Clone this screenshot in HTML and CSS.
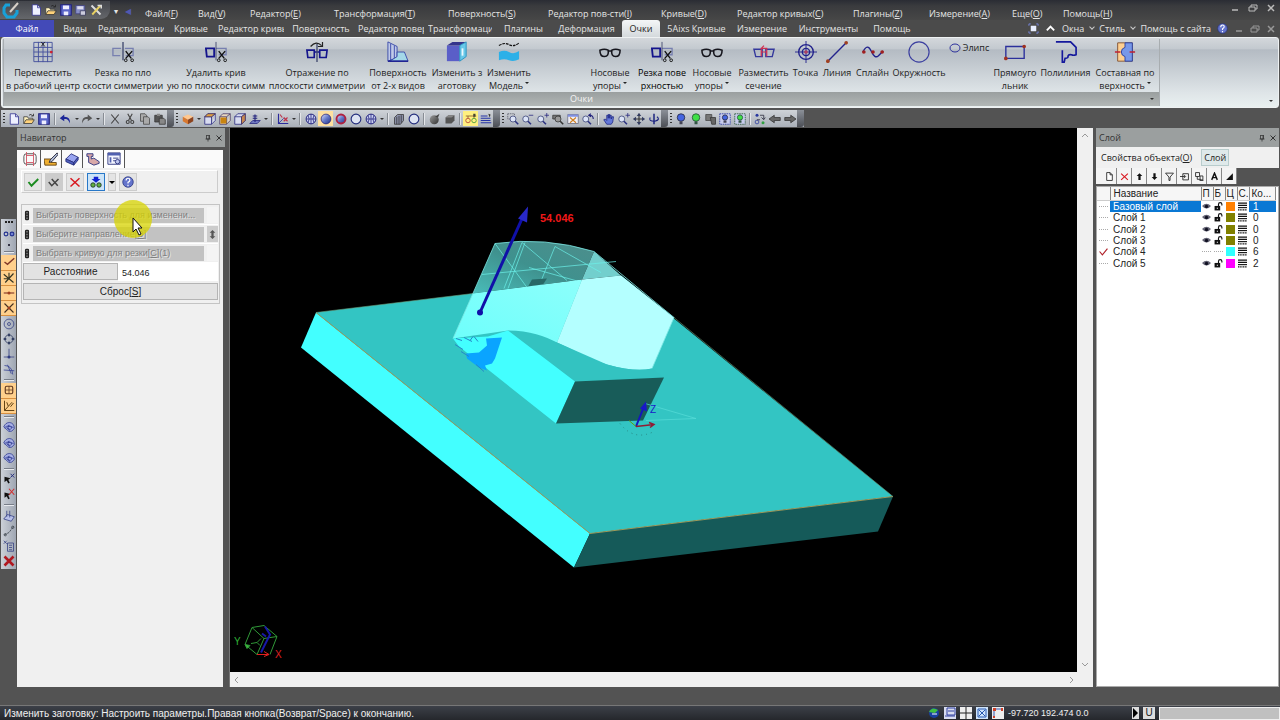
FILE: index.html
```html
<!DOCTYPE html>
<html lang="ru">
<head>
    <meta charset="UTF-8">
    <meta name="viewport" content="width=device-width, initial-scale=1.0">
    <title>Очки</title>
    <link rel="stylesheet" href="styles.css">
</head>
<body>
    <!-- icon sprite -->
    <svg class="sprite" aria-hidden="true">
        <linearGradient id="ball" x1="0" y1="0" x2="1" y2="1"><stop offset="0" stop-color="#dfe6ff"/><stop offset=".5" stop-color="#6478c8"/><stop offset="1" stop-color="#222f80"/></linearGradient>
        <linearGradient id="grayball" x1="0" y1="0" x2="1" y2="1"><stop offset="0" stop-color="#999"/><stop offset="1" stop-color="#333"/></linearGradient>
        <symbol id="i-new" viewBox="0 0 16 16"><path d="M3 1h7l4 4v10H3z" fill="#eef0ff" stroke="#2a2a8c"/><path d="M10 1v4h4" fill="none" stroke="#2a2a8c"/></symbol>
        <symbol id="i-open" viewBox="0 0 16 16"><path d="M1 14V5h5l1 2h6v2" fill="#fff3c0" stroke="#333"/><path d="M1 14l3-5h11l-3 5z" fill="#ffd27a" stroke="#333"/><path d="M8 3q3-3 5 1m-2 0h3V1" fill="none" stroke="#222"/></symbol>
        <symbol id="i-save" viewBox="0 0 16 16"><path d="M1 1h14v14H1z" fill="#5a64c8" stroke="#20207c" stroke-width="1.5"/><path d="M4 2h8v5H4zM5 10h6v5H5z" fill="#eef"/></symbol>
        <symbol id="i-saveas" viewBox="0 0 16 16"><path d="M1 2h12v11H1z" fill="#8890c8" stroke="#404080"/><path d="M3 3h8v4H3z" fill="#dde"/><path d="M7 9h7v6H7z" fill="#ccd" stroke="#335"/></symbol>
        <symbol id="i-tools" viewBox="0 0 16 16"><path d="M2 2l12 12" stroke="#ddd" stroke-width="2.5"/><path d="M14 2L3 14" stroke="#e8d060" stroke-width="2.5"/><path d="M10 2h5v4" fill="none" stroke="#ddd" stroke-width="2"/></symbol>
        <symbol id="i-undo" viewBox="0 0 16 16"><path d="M7 2L1 7l6 4V8q6-1 7 6 2-9-7-9z" fill="#1c2698"/></symbol>
        <symbol id="i-redo" viewBox="0 0 16 16"><path d="M9 2l6 5-6 4V8q-6-1-7 6-2-9 7-9z" fill="#555"/></symbol>
        <symbol id="i-x" viewBox="0 0 16 16"><path d="M3 2l10 12M13 2L3 14" stroke="#444" stroke-width="1.5"/></symbol>
        <symbol id="i-cut" viewBox="0 0 16 16"><path d="M5 1l5 9M11 1l-5 9" stroke="#444" stroke-width="1.5"/><circle cx="5" cy="12" r="2" fill="none" stroke="#444" stroke-width="1.5"/><circle cx="11" cy="12" r="2" fill="none" stroke="#444" stroke-width="1.5"/></symbol>
        <symbol id="i-copy" viewBox="0 0 16 16"><path d="M2 1h6l2 2v8H2z" fill="#aaa" stroke="#444"/><path d="M6 5h6l2 2v8H6z" fill="#aaa" stroke="#444"/></symbol>
        <symbol id="i-paste" viewBox="0 0 16 16"><path d="M1 3h10v9H1z" fill="#555" stroke="#333"/><path d="M4 1h4v3H4z" fill="#888"/><path d="M7 7h6l2 2v6H7z" fill="#888" stroke="#333"/></symbol>
        <symbol id="i-box" viewBox="0 0 16 16"><path d="M1 5l7-3 7 3-7 4z" fill="#ffc890"/><path d="M1 5l7 4v6l-7-4z" fill="#d87830"/><path d="M15 5L8 9v6l7-4z" fill="#8c4420"/></symbol>
        <symbol id="i-cube" viewBox="0 0 16 16"><path d="M1 5h9v10H1zM1 5l4-4h10l-5 4M15 1v9l-5 5" fill="#d8dcf0" stroke="#22227c"/><path d="M1 5l4-4h10l-5 4z" fill="#e0a040" stroke="#403060"/></symbol>
        <symbol id="i-cubef" viewBox="0 0 16 16"><path d="M1 5h9v10H1zM1 5l4-4h10l-5 4M15 1v9l-5 5" fill="#e8d8c0" stroke="#403060"/><path d="M2 6h8v8H2z" fill="#c88410"/></symbol>
        <symbol id="i-cuber" viewBox="0 0 16 16"><path d="M1 5h9v10H1zM1 5l4-4h10l-5 4M15 1v9l-5 5" fill="#d8dcf0" stroke="#22227c"/><path d="M10 5l5-4v9l-5 5z" fill="#c88850" stroke="#403060"/></symbol>
        <symbol id="i-plane" viewBox="0 0 16 16"><path d="M1 14l4-4h10l-4 4z" fill="#7078c0" stroke="#22227c"/><path d="M8 12V2M5 4h6M5 7h6" stroke="#22227c" stroke-width="1.5"/></symbol>
        <symbol id="i-axes" viewBox="0 0 16 16"><path d="M2 1v13h13" fill="none" stroke="#2a2a9c" stroke-width="1.5"/><path d="M2 14l7-7" stroke="#2a2a9c"/><path d="M9 6l5 5m0-5l-5 5" stroke="#c03048" stroke-width="1.5"/><path d="M4 2l3 4" stroke="#c03048" stroke-width="1.5"/></symbol>
        <symbol id="i-globe" viewBox="0 0 16 16"><circle cx="8" cy="8" r="6.5" fill="#c8cef0" stroke="#20207c" stroke-width="1.3"/><path d="M2 8h12M8 1.5v13M4 3q3 5 0 10M12 3q-3 5 0 10" fill="none" stroke="#20207c"/></symbol>
        <symbol id="i-ball" viewBox="0 0 16 16"><circle cx="8" cy="8" r="6.5" fill="url(#ball)" stroke="#20207c"/></symbol>
        <symbol id="i-redball" viewBox="0 0 16 16"><circle cx="8" cy="8" r="6" fill="url(#ball)" stroke="#b02040" stroke-width="2.5"/></symbol>
        <symbol id="i-ring" viewBox="0 0 16 16"><circle cx="8" cy="8" r="6.5" fill="#dde3f2" stroke="#222c7c" stroke-width="1.5"/></symbol>
        <symbol id="i-hatch" viewBox="0 0 16 16"><path d="M2 6l4-4h8v8l-4 5H2z" fill="#8a8fa8" stroke="#333"/><path d="M5 5v10M8 4v11M11 3v10" stroke="#333"/></symbol>
        <symbol id="i-grayball" viewBox="0 0 16 16"><circle cx="7" cy="9" r="6" fill="url(#grayball)"/><path d="M8 5l6-4-2 5z" fill="#444"/></symbol>
        <symbol id="i-graybox" viewBox="0 0 16 16"><path d="M2 6l4-3h8v7l-4 4H2z" fill="#555"/><path d="M2 6l4-3h8l-4 3z" fill="#888"/></symbol>
        <symbol id="i-glasses-y" viewBox="0 0 16 16"><path d="M1 4h14M4 4v3m8-3v3" stroke="#805020"/><circle cx="4" cy="10" r="3" fill="none" stroke="#b03030"/><circle cx="12" cy="10" r="3" fill="none" stroke="#309030"/><path d="M11 1h3v4h-3z" fill="#443"/></symbol>
        <symbol id="i-lines" viewBox="0 0 16 16"><path d="M1 4h9M1 7h13M1 10h13M1 13h14" stroke="#2634a8" stroke-width="1.5"/><path d="M11 1l3 1-1 4z" fill="#333"/></symbol>
        <symbol id="i-zoomwin" viewBox="0 0 16 16"><path d="M1 1h9v7H1z" fill="none" stroke="#556" stroke-dasharray="2 1"/><circle cx="8" cy="8" r="4" fill="#dce4f8" stroke="#333c70"/><path d="M11 11l4 4" stroke="#2a3080" stroke-width="2"/></symbol>
        <symbol id="i-zoomminus" viewBox="0 0 16 16"><circle cx="5" cy="8" r="4" fill="#dce4f8" stroke="#333c70"/><path d="M8 11l4 4" stroke="#2a3080" stroke-width="2"/><path d="M9 3h6" stroke="#22227c"/></symbol>
        <symbol id="i-zoomplus" viewBox="0 0 16 16"><circle cx="5" cy="8" r="4" fill="#dce4f8" stroke="#333c70"/><path d="M8 11l4 4" stroke="#2a3080" stroke-width="2"/><path d="M10 3h6M13 0v6" stroke="#22227c"/></symbol>
        <symbol id="i-zoomprev" viewBox="0 0 16 16"><circle cx="5" cy="8" r="4" fill="#dce4f8" stroke="#333c70"/><path d="M8 11l4 4" stroke="#2a3080" stroke-width="2"/><path d="M15 8q0-5-5-5m2-2l-3 2 3 2" fill="none" stroke="#22227c" stroke-width="1.5"/></symbol>
        <symbol id="i-zoomgray" viewBox="0 0 16 16"><path d="M1 3h10v5H1z" fill="#777" stroke="#333"/><circle cx="8" cy="8" r="4" fill="#999" stroke="#333"/><path d="M11 11l4 4" stroke="#333" stroke-width="2"/></symbol>
        <symbol id="i-fit" viewBox="0 0 16 16"><path d="M1 2h14v12H1z" fill="#f0f0f8" stroke="#667"/><path d="M1 2h14v3H1z" fill="#8090e0"/><path d="M4 6l8 7m0-7l-8 7" stroke="#d08020" stroke-width="1.5"/></symbol>
        <symbol id="i-hand" viewBox="0 0 16 16"><path d="M5 15L1 9l2-1 2 2V3h2v4-5h2v5-4h2v5l1-3h2l-1 7-2 3z" fill="#6478d8" stroke="#1c2480"/></symbol>
        <symbol id="i-move" viewBox="0 0 16 16"><path d="M8 1v14M1 8h14" stroke="#333" stroke-width="1.5"/><path d="M8 0l3 4H5zM8 16l3-4H5zM0 8l4-3v6zM16 8l-4-3v6z" fill="#333c60"/></symbol>
        <symbol id="i-rot" viewBox="0 0 16 16"><path d="M8 1v14" stroke="#1c2480" stroke-width="2"/><path d="M12 5q5 4-3 6-9 0-6-5" fill="none" stroke="#1c2480" stroke-width="1.5"/></symbol>
        <symbol id="i-bulb" viewBox="0 0 16 16"><circle cx="8" cy="6" r="5" fill="#4464e0" stroke="#223"/><path d="M6 11h4v4H6z" fill="#445"/></symbol>
        <symbol id="i-bulbg" viewBox="0 0 16 16"><circle cx="8" cy="6" r="5" fill="#40e048" stroke="#243"/><path d="M6 11h4v4H6z" fill="#354"/></symbol>
        <symbol id="i-graycopy" viewBox="0 0 16 16"><path d="M1 2h8v8H1z" fill="#777" stroke="#444"/><path d="M7 6h7v9H9z" fill="#666" stroke="#333"/></symbol>
        <symbol id="i-bulbsel" viewBox="0 0 16 16"><path d="M1 1h14v14H1z" fill="#c8ccec" stroke="#2030a0" stroke-dasharray="2 1"/><circle cx="8" cy="6" r="3.5" fill="#4464e0" stroke="#223"/><path d="M6 10h4v3H6z" fill="#445"/></symbol>
        <symbol id="i-bulbselg" viewBox="0 0 16 16"><path d="M1 1h14v14H1z" fill="#c8ccec" stroke="#205030" stroke-dasharray="2 1"/><circle cx="8" cy="6" r="3.5" fill="#40e048" stroke="#243"/><path d="M6 10h4v3H6z" fill="#354"/></symbol>
        <symbol id="i-swap" viewBox="0 0 16 16"><circle cx="4" cy="3" r="2" fill="#2838a0"/><circle cx="12" cy="13" r="2" fill="#30a040"/><circle cx="4" cy="12" r="2.5" fill="none" stroke="#2838a0"/><path d="M8 3h5v5M10 6l3 3 2-3M8 9H4" fill="none" stroke="#223"/></symbol>
        <symbol id="i-left" viewBox="0 0 16 16"><path d="M0 8l7-5v3h8v4H7v3z" fill="#666" stroke="#333"/></symbol>
        <symbol id="i-right" viewBox="0 0 16 16"><path d="M16 8L9 3v3H1v4h8v3z" fill="#666" stroke="#333"/></symbol>

        <!-- ribbon icons -->
        <symbol id="r-grid" viewBox="0 0 24 24"><path d="M2 1.5h20v21H2zM7 1v22M12 1v22M17 1v22M2 7h20M2 12h20M2 17h20" fill="none" stroke="#44509c"/><path d="M10 1l4 5m0-5l-4 5" stroke="#222"/><circle cx="21" cy="12" r="1.5" fill="#d02030"/></symbol>
        <symbol id="r-cutsym" viewBox="0 0 24 24"><path d="M10 8H1v8h8M14 8h9v8h-8" fill="none" stroke="#7880b0" stroke-width="1.5"/><path d="M12 1v20" stroke="#444c70" stroke-width="1.5"/><path d="M15 11l6 8m1-8l-7 8" stroke="#111" stroke-width="1.5"/><circle cx="15" cy="21" r="1.5" fill="none" stroke="#111"/><circle cx="22" cy="21" r="1.5" fill="none" stroke="#111"/></symbol>
        <symbol id="r-cutdel" viewBox="0 0 24 24"><path d="M1 8h9v9H2z" fill="none" stroke="#14148c" stroke-width="2"/><path d="M12 8h11v7h-8" fill="none" stroke="#7880b0" stroke-width="1.5"/><path d="M12 1v20" stroke="#444c70"/><path d="M15 11l6 8m1-8l-7 8" stroke="#111" stroke-width="1.5"/><circle cx="15" cy="21" r="1.5" fill="none" stroke="#111"/><circle cx="22" cy="21" r="1.5" fill="none" stroke="#111"/></symbol>
        <symbol id="r-mirror" viewBox="0 0 24 24"><path d="M1 10h8v8H2zM15 10h8l-1 8h-7zM9 12h6" fill="none" stroke="#14148c" stroke-width="1.8"/><path d="M12 3v20" stroke="#444c70" stroke-width="1.5"/><path d="M5 6q6-7 12-1M13 6h5V1" fill="none" stroke="#222" stroke-width="1.3"/></symbol>
        <symbol id="r-views" viewBox="0 0 24 24"><path d="M1 1l10 5v12L1 22zM4 3v18M8 5v14" fill="#c0cae8" stroke="#3848a8"/><path d="M11 12h8l4 10H3l8-5z" fill="#a4d8e8" stroke="#3848a8"/><path d="M1 22h22" stroke="#14148c" stroke-width="1.5"/></symbol>
        <symbol id="r-block" viewBox="0 0 24 24"><path d="M1 5h14v17H1z" fill="#5a5ec8"/><path d="M1 5l6-4h15l-7 4z" fill="#34348c"/><path d="M15 5l7-4v16l-7 5z" fill="#68c8e8" stroke="#2890c0"/><path d="M18 8v8" stroke="#eaf8ff" stroke-width="2"/></symbol>
        <symbol id="r-model" viewBox="0 0 24 24"><path d="M1 5q6-4 11-1t11-2" fill="none" stroke="#111" stroke-dasharray="3 1" stroke-width="1.3"/><path d="M1 12q6-3 11 0t11-1v9q-6 3-11 1T1 21z" fill="#2cb0e8"/></symbol>
        <symbol id="r-glasses" viewBox="0 0 24 24"><path d="M1 10q5-2 9 0 1 7-4 7t-5-7zM14 10q4-2 9 0 0 7-5 7t-4-7zM10 11h4" fill="none" stroke="#15151c" stroke-width="1.7"/></symbol>
        <symbol id="r-section" viewBox="0 0 24 24"><path d="M1 9h9v8H3zM14 9h9l-2 8h-7z" fill="none" stroke="#34389c" stroke-width="1.5"/><path d="M9 17V8h6v9M9 12h6M9 8l3-3" fill="none" stroke="#d03050" stroke-width="1.3"/></symbol>
        <symbol id="r-point" viewBox="0 0 24 24"><circle cx="12" cy="12" r="8" fill="none" stroke="#22228c" stroke-width="1.5"/><circle cx="12" cy="12" r="4" fill="none" stroke="#22228c" stroke-width="1.5"/><path d="M12 0v24M0 12h24" stroke="#22228c"/><circle cx="12" cy="12" r="2" fill="#b04060"/></symbol>
        <symbol id="r-line" viewBox="0 0 24 24"><path d="M2 22L22 2" stroke="#22228c" stroke-width="1.5"/><circle cx="2" cy="22" r="2" fill="#a04020"/><circle cx="22" cy="2" r="2" fill="#a04020"/></symbol>
        <symbol id="r-spline" viewBox="0 0 24 24"><path d="M1 12q5-10 9-1t8 5 5-5" fill="none" stroke="#22228c" stroke-width="1.5"/><circle cx="2" cy="12" r="2" fill="#a02020"/><circle cx="12" cy="12" r="2" fill="#a02020"/><circle cx="22" cy="12" r="2" fill="#a02020"/></symbol>
        <symbol id="r-circle" viewBox="0 0 24 24"><circle cx="12" cy="12" r="11" fill="none" stroke="#3c40a0" stroke-width="1.3"/></symbol>
        <symbol id="r-ellipse" viewBox="0 0 24 24"><ellipse cx="12" cy="12" rx="10" ry="8" fill="none" stroke="#2c309c" stroke-width="2"/></symbol>
        <symbol id="r-rect" viewBox="0 0 24 24"><path d="M2 6h20v13H2z" fill="none" stroke="#2c309c" stroke-width="1.5"/><circle cx="2" cy="19" r="2" fill="#a03020"/><circle cx="22" cy="6" r="2" fill="#a03020"/></symbol>
        <symbol id="r-poly" viewBox="0 0 24 24"><path d="M1 1h16l6 6v8q-3 1-5 0-4-1-4 3-1 1-3 1l-1 4H8V10" fill="none" stroke="#14189c" stroke-width="1.8"/></symbol>
        <symbol id="r-compound" viewBox="0 0 24 24"><path d="M4 2h16v20H4z" fill="#ffd090" stroke="#805030"/><path d="M12 2h8v20h-8v-5q-4-1-4-5t4-5z" fill="#7898e8" stroke="#2840a0"/><path d="M1 12h6M23 12h-6" stroke="#c02030" stroke-width="1.5"/></symbol>

        <!-- snap bar -->
        <symbol id="s-link" viewBox="0 0 16 16"><circle cx="4" cy="8" r="2.5" fill="none" stroke="#223090" stroke-width="1.5"/><circle cx="12" cy="8" r="2.5" fill="#7080d0" stroke="#223090" stroke-width="1.5"/></symbol>
        <symbol id="s-end" viewBox="0 0 16 16"><path d="M2 8l4 3 9-8" fill="none" stroke="#803828" stroke-width="2"/></symbol>
        <symbol id="s-near" viewBox="0 0 16 16"><path d="M1 3l13 11M14 2L3 14M8 1v8H1" fill="none" stroke="#332" stroke-width="1.5"/></symbol>
        <symbol id="s-mid" viewBox="0 0 16 16"><path d="M1 8h14" stroke="#803828" stroke-width="1.5"/><circle cx="8" cy="8" r="2" fill="#a04020"/></symbol>
        <symbol id="s-cross" viewBox="0 0 16 16"><path d="M2 2l12 12M14 2L2 14" stroke="#443020" stroke-width="1.5"/><circle cx="8" cy="8" r="2" fill="#a04020"/></symbol>
        <symbol id="s-center" viewBox="0 0 16 16"><circle cx="8" cy="8" r="6.5" fill="none" stroke="#303c80"/><circle cx="8" cy="8" r="2" fill="none" stroke="#303c80"/></symbol>
        <symbol id="s-quad" viewBox="0 0 16 16"><circle cx="8" cy="8" r="5.5" fill="none" stroke="#303c60"/><path d="M8 0l2 3-2 2-2-2zM8 11l2 2-2 3-2-3zM0 8l3-2 2 2-2 2zM11 8l2-2 3 2-3 2z" fill="#303c60"/></symbol>
        <symbol id="s-perp" viewBox="0 0 16 16"><path d="M8 1v11M1 12h14" stroke="#303c80"/><circle cx="8" cy="12" r="2" fill="#303c80"/></symbol>
        <symbol id="s-tan" viewBox="0 0 16 16"><path d="M2 2q10 0 11 12M1 8l14 1M6 1l5 12" fill="none" stroke="#303c90"/></symbol>
        <symbol id="s-grid" viewBox="0 0 16 16"><rect x="3" y="3" width="10" height="10" rx="2" fill="none" stroke="#603820" stroke-width="1.5"/><path d="M8 3v10M3 8h10" stroke="#603820"/></symbol>
        <symbol id="s-graph" viewBox="0 0 16 16"><path d="M2 1v13h13M2 14L12 3M5 3l2 5M10 9l4-5" fill="none" stroke="#604010" stroke-width="1.3"/></symbol>
        <symbol id="s-surf" viewBox="0 0 16 16"><path d="M1 8q2-6 8-6 6 1 6 8-3 5-7 4z" fill="#a8b0e4" stroke="#2c3890"/><path d="M2 9q5-5 12 0M8 5q-3 4 1 8M5 9q2-4 7 0-2 3-5 2z" fill="none" stroke="#2c3890"/></symbol>
        <symbol id="s-pick" viewBox="0 0 16 16"><path d="M2 5l8 2-3 2 2 4-2 1-2-4-3 2z" fill="#111"/><path d="M10 1l5 5m0-5l-5 5" stroke="#283080" stroke-width="1.3"/></symbol>
        <symbol id="s-unpick" viewBox="0 0 16 16"><path d="M2 6l8 2-3 2 2 4-2 1-2-4-3 2z" fill="#111"/><path d="M8 1l7 8m0-8L8 9" stroke="#d03030" stroke-width="1.5"/></symbol>
        <symbol id="s-proj" viewBox="0 0 16 16"><path d="M1 12l5-6 9 3-4 6z" fill="#b8c0e8" stroke="#303c80"/><path d="M5 1v8M9 1v9" stroke="#303c80"/></symbol>
        <symbol id="s-chain" viewBox="0 0 16 16"><path d="M2 13l6-3 6-8" fill="none" stroke="#303840" stroke-dasharray="3 1"/><circle cx="3" cy="13" r="1.5" fill="none" stroke="#303840"/><circle cx="13" cy="3" r="1.5" fill="none" stroke="#303840"/></symbol>
        <symbol id="s-list" viewBox="0 0 16 16"><path d="M6 4h8v11H6zM8 7h4M8 10h4M8 13h4" fill="none" stroke="#303c80"/><path d="M1 1l4 4m0-4L1 5" stroke="#303c80"/></symbol>
        <symbol id="s-clear" viewBox="0 0 16 16"><path d="M2 2l12 12M14 2L2 14" stroke="#b01820" stroke-width="3.5"/></symbol>

        <!-- navigator -->
        <symbol id="n-frame" viewBox="0 0 16 16"><rect x="1" y="2" width="14" height="12" rx="3" fill="none" stroke="#444"/><rect x="4" y="4" width="8" height="8" fill="none" stroke="#d05060"/><path d="M4 0v4M12 0v4M4 12v4M12 12v4" stroke="#d05060"/></symbol>
        <symbol id="n-pen" viewBox="0 0 16 16"><path d="M0 8h8v4h6v3H1z" fill="#f0b030" stroke="#604010"/><path d="M15 1L7 9l-1 3 3-1 7-8z" fill="#b0bcd8" stroke="#223"/></symbol>
        <symbol id="n-slab" viewBox="0 0 16 16"><path d="M1 8l6-6 8 4-5 6z" fill="#98a4f0" stroke="#28307c"/><path d="M1 8l9 4v3l-9-4zM10 12l5-6v3l-5 6z" fill="#5060c0" stroke="#28307c"/></symbol>
        <symbol id="n-path" viewBox="0 0 16 16"><path d="M1 2h7v3H6v3l3-1 6 4v2l-6 2-6-3V5H1z" fill="#d8a8a8" stroke="#28307c"/></symbol>
        <symbol id="n-win" viewBox="0 0 16 16"><path d="M1 1h14v13H1z" fill="#f4f6ff" stroke="#28307c"/><path d="M1 1h14v3H1zM3 6h2v6H3z" fill="#5060b0"/><path d="M7 7h6M7 10h3" stroke="#28307c"/><circle cx="12" cy="11" r="2.5" fill="#c0c8f0" stroke="#28307c"/></symbol>
        <symbol id="n-ok" viewBox="0 0 16 16"><path d="M2 8l4 5 9-9" fill="none" stroke="#1c8c20" stroke-width="2.5"/></symbol>
        <symbol id="n-apply" viewBox="0 0 16 16"><path d="M1 8l4 5 9-9M5 4l8 9" fill="none" stroke="#444" stroke-width="2"/></symbol>
        <symbol id="n-cancel" viewBox="0 0 16 16"><path d="M2 3l12 11M14 3L2 14" stroke="#d81820" stroke-width="2"/></symbol>
        <symbol id="n-preview" viewBox="0 0 16 16"><path d="M5 1h6v3h3l-6 5-6-5h3z" fill="#1020d0"/><circle cx="4" cy="12" r="3" fill="#60b040" stroke="#122"/><circle cx="12" cy="12" r="3" fill="#60b040" stroke="#122"/></symbol>
        <symbol id="n-help" viewBox="0 0 16 16"><circle cx="8" cy="8" r="7" fill="#6474cc" stroke="#24307c"/><path d="M5.5 6q0-3 2.5-3t2.5 2.5Q10.5 7 8 8.5V10M8 11.5v2" fill="none" stroke="#fff" stroke-width="1.6"/></symbol>
        <symbol id="n-light" viewBox="0 0 8 16"><rect x="1" y="1" width="6" height="14" rx="2" fill="#222"/><path d="M3 4h2M3 8h2M3 12h2" stroke="#888" stroke-width="2"/></symbol>
        <symbol id="n-flip" viewBox="0 0 16 16"><path d="M8 0l5 5h-3v6h3l-5 5-5-5h3V5H3z" fill="#555"/></symbol>
        <symbol id="n-pin" viewBox="0 0 16 16"><path d="M4 3h8M5 3v7h6V3M10 3v7M3 10h10M8 10v5" fill="none" stroke="#333" stroke-width="1.5"/></symbol>
        <symbol id="n-close" viewBox="0 0 16 16"><path d="M3 3l10 10M13 3L3 13" stroke="#333" stroke-width="2"/></symbol>

        <!-- layers -->
        <symbol id="l-up" viewBox="0 0 16 16"><path d="M8 2l5 5h-3v7H6V7H3z" fill="#111"/></symbol>
        <symbol id="l-down" viewBox="0 0 16 16"><path d="M8 14l5-5h-3V2H6v7H3z" fill="#111"/></symbol>
        <symbol id="l-page" viewBox="0 0 16 16"><path d="M3 1h6l4 4v10H3zM9 1v4h4" fill="#fff" stroke="#222" stroke-width="1.5"/></symbol>
        <symbol id="l-filter" viewBox="0 0 16 16"><path d="M1 2h14L9 9v6H7V9z" fill="none" stroke="#222" stroke-width="1.5"/></symbol>
        <symbol id="l-into" viewBox="0 0 16 16"><path d="M5 3h10v11H5zM0 8h9M7 5l3 3-3 3" fill="none" stroke="#222" stroke-width="1.5"/></symbol>
        <symbol id="l-tree" viewBox="0 0 16 16"><path d="M1 1h7v7H1zM4 8v5h6M9 7h5v7H9zM8 15h7" fill="none" stroke="#222" stroke-width="1.5"/></symbol>
        <symbol id="l-font" viewBox="0 0 16 16"><path d="M3 14L8 2l5 12M5 10h6" fill="none" stroke="#111" stroke-width="2.5"/></symbol>
        <symbol id="l-tri" viewBox="0 0 16 16"><path d="M14 2v12H2z" fill="#111"/></symbol>
        <symbol id="l-eye" viewBox="0 0 16 16"><path d="M0 7q8-8 16 0-8 9-16 0" fill="#667"/><circle cx="8" cy="8" r="3" fill="#112"/></symbol>
        <symbol id="l-lock" viewBox="0 0 16 16"><path d="M1 7h10v8H1z" fill="#111"/><path d="M8 8V4q0-3 3-3t3 3v2" fill="none" stroke="#111" stroke-width="2"/><path d="M5 10h2v2H5z" fill="#fff"/></symbol>
        <symbol id="l-style" viewBox="0 0 16 16"><path d="M0 2h16M0 6h16" stroke="#111" stroke-width="2"/><path d="M0 10h16" stroke="#111" stroke-width="2"/><path d="M0 14h16" stroke="#111" stroke-width="2" stroke-dasharray="2 1"/></symbol>
    </svg>

    <header class="titlebar">
        <div class="quick">
            <svg class="logo" viewBox="0 0 20 17" aria-hidden="true"><path d="M9 3H5L3 6v5l3 4h7l3-4V8" fill="none" stroke="#18a0d8" stroke-width="3"/><path d="M17 1l-8 9" stroke="#d8d0c8" stroke-width="2"/></svg>
            <button class="tool" title="Новый"><svg><use href="#i-new"/></svg></button>
            <button class="tool" title="Открыть"><svg><use href="#i-open"/></svg></button>
            <button class="tool" title="Сохранить"><svg><use href="#i-save"/></svg></button>
            <button class="tool" title="Сохранить как"><svg><use href="#i-saveas"/></svg></button>
            <button class="tool" title="Настройки"><svg><use href="#i-tools"/></svg></button>
        </div>
        <button class="quick-more" title="Еще">▾</button>
        <button class="quick-back" title="Назад">◀</button>
        <nav class="menu">
            <button>Файл(<u>F</u>)</button>
            <button>Вид(<u>V</u>)</button>
            <button>Редактор(<u>E</u>)</button>
            <button>Трансформация(<u>T</u>)</button>
            <button>Поверхность(<u>S</u>)</button>
            <button>Редактор пов-сти(<u>I</u>)</button>
            <button>Кривые(<u>D</u>)</button>
            <button>Редактор кривых(<u>C</u>)</button>
            <button>Плагины(<u>Z</u>)</button>
            <button>Измерение(<u>A</u>)</button>
            <button>Еще(<u>O</u>)</button>
            <button>Помощь(<u>H</u>)</button>
        </nav>
        <div class="winctl">
            <button title="Свернуть"><svg viewBox="0 0 10 10"><path d="M2 7h6" stroke="#bbb" stroke-width="1.5"/></svg></button>
            <button title="Развернуть"><svg viewBox="0 0 10 10"><path d="M1 4h6v4H1zM3 4V2h6v4H7" fill="none" stroke="#bbb"/></svg></button>
            <button title="Закрыть"><svg viewBox="0 0 10 10"><path d="M2 2l6 6M8 2L2 8" stroke="#bbb" stroke-width="1.5"/></svg></button>
        </div>
    </header>

    <div class="tabrow">
        <nav class="tabs">
            <button class="tab tab-file">Файл</button>
            <button class="tab">Виды</button>
            <button class="tab">Редактировани</button>
            <button class="tab">Кривые</button>
            <button class="tab">Редактор кривых</button>
            <button class="tab">Поверхность</button>
            <button class="tab">Редактор поверх</button>
            <button class="tab">Трансформаци</button>
            <button class="tab">Плагины</button>
            <button class="tab">Деформация</button>
            <button class="tab tab-active">Очки</button>
            <button class="tab">5Aixs Кривые</button>
            <button class="tab">Измерение</button>
            <button class="tab">Инструменты</button>
            <button class="tab">Помощь</button>
        </nav>
        <div class="tabextra">
            <button title="Во весь экран"><svg viewBox="0 0 12 12"><path d="M3 3h6v6H3z" fill="#e8eeff"/><path d="M1 3V1h2M9 1h2v2M11 9v2H9M3 11H1V9" fill="none" stroke="#7888e0"/></svg></button>
            <button title="Свернуть ленту"><svg viewBox="0 0 12 12"><path d="M2 8l4-4 4 4" fill="none" stroke="#fff" stroke-width="2"/></svg></button>
            <button>Окна</button>
            <button><i class="chev"></i>Стиль</button>
            <button><i class="chev"></i>Помощь с сайта</button>
            <button title="Справка"><svg><use href="#n-help"/></svg></button>
        </div>
        <div class="winctl winctl-dim">
            <button title="Свернуть окно"><svg viewBox="0 0 10 10"><path d="M2 7h6" stroke="#999" stroke-width="1.5"/></svg></button>
            <button title="Развернуть окно"><svg viewBox="0 0 10 10"><path d="M1 4h6v4H1zM3 4V2h6v4H7" fill="none" stroke="#999"/></svg></button>
            <button title="Закрыть окно"><svg viewBox="0 0 10 10"><path d="M2 2l6 6M8 2L2 8" stroke="#999" stroke-width="1.5"/></svg></button>
        </div>
    </div>

    <section class="ribbon">
        <div class="group">
            <div class="group-items">
                <button class="big"><svg><use href="#r-grid"/></svg>Переместить<br>в рабочий центр</button>
                <button class="big"><svg><use href="#r-cutsym"/></svg>Резка по пло<br>скости симметрии</button>
                <button class="big"><svg><use href="#r-cutdel"/></svg>Удалить крив<br>ую по плоскости симм</button>
                <button class="big"><svg><use href="#r-mirror"/></svg>Отражение по<br>плоскости симметрии</button>
                <button class="big"><svg><use href="#r-views"/></svg>Поверхность<br>от 2-х видов</button>
                <button class="big"><svg><use href="#r-block"/></svg>Изменить з<br>аготовку</button>
                <button class="big"><svg><use href="#r-model"/></svg>Изменить<br><span class="drop">Модель</span></button>
                <span></span>
                <button class="big"><svg><use href="#r-glasses"/></svg>Носовые<br><span class="drop">упоры</span></button>
                <button class="big big-on"><svg><use href="#r-cutdel"/></svg>Резка пове<br>рхностью</button>
                <button class="big"><svg><use href="#r-glasses"/></svg>Носовые<br><span class="drop">упоры</span></button>
                <button class="big"><svg><use href="#r-section"/></svg>Разместить<br>сечение</button>
                <button class="big"><svg><use href="#r-point"/></svg>Точка</button>
                <button class="big"><svg><use href="#r-line"/></svg>Линия</button>
                <button class="big"><svg><use href="#r-spline"/></svg>Сплайн</button>
                <button class="big"><svg><use href="#r-circle"/></svg>Окружность</button>
                <button class="small"><svg><use href="#r-ellipse"/></svg>Элипс</button>
                <button class="big"><svg><use href="#r-rect"/></svg>Прямоуго<br>льник</button>
                <button class="big"><svg><use href="#r-poly"/></svg>Полилиния</button>
                <button class="big"><svg><use href="#r-compound"/></svg>Составная по<br><span class="drop">верхность</span></button>
            </div>
            <div class="group-name">Очки<i class="caret"></i></div>
        </div>
        <i class="caret ribbon-caret"></i>
    </section>

    <div class="toolbars">
        <div class="bar bar-edit">
            <i class="grip"></i>
            <button class="tool" title="Новый"><svg><use href="#i-new"/></svg></button>
            <button class="tool" title="Открыть"><svg><use href="#i-open"/></svg></button>
            <button class="tool" title="Сохранить"><svg><use href="#i-save"/></svg></button>
            <i class="sep"></i>
            <button class="tool" title="Отменить"><svg><use href="#i-undo"/></svg></button>
            <i class="caret"></i>
            <button class="tool" title="Повторить"><svg><use href="#i-redo"/></svg></button>
            <i class="caret"></i>
            <i class="sep"></i>
            <button class="tool" title="Удалить"><svg><use href="#i-x"/></svg></button>
            <button class="tool" title="Вырезать"><svg><use href="#i-cut"/></svg></button>
            <button class="tool" title="Копировать"><svg><use href="#i-copy"/></svg></button>
            <button class="tool" title="Вставить"><svg><use href="#i-paste"/></svg></button>
            <i class="cap"></i>
        </div>
        <div class="bar bar-view">
            <i class="grip"></i>
            <button class="tool" title="Изометрия"><svg><use href="#i-box"/></svg></button>
            <i class="caret"></i>
            <button class="tool" title="Сверху"><svg><use href="#i-cube"/></svg></button>
            <button class="tool" title="Спереди"><svg><use href="#i-cubef"/></svg></button>
            <button class="tool" title="Справа"><svg><use href="#i-cuber"/></svg></button>
            <button class="tool" title="Плоскость"><svg><use href="#i-plane"/></svg></button>
            <i class="caret"></i>
            <i class="sep"></i>
            <button class="tool" title="Оси"><svg><use href="#i-axes"/></svg></button>
            <i class="caret"></i>
            <i class="sep"></i>
            <button class="tool" title="Каркас"><svg><use href="#i-globe"/></svg></button>
            <button class="tool tool-on" title="Закраска"><svg><use href="#i-ball"/></svg></button>
            <button class="tool" title="Закраска с кромками"><svg><use href="#i-redball"/></svg></button>
            <button class="tool" title="Контур"><svg><use href="#i-ring"/></svg></button>
            <button class="tool" title="Сетка"><svg><use href="#i-globe"/></svg></button>
            <i class="caret"></i>
            <i class="sep"></i>
            <button class="tool" title="Штриховка"><svg><use href="#i-hatch"/></svg></button>
            <button class="tool" title="Прозрачность"><svg><use href="#i-ring"/></svg></button>
            <i class="sep"></i>
            <button class="tool" title="Сфера"><svg><use href="#i-grayball"/></svg></button>
            <button class="tool" title="Блок"><svg><use href="#i-graybox"/></svg></button>
            <i class="sep"></i>
            <button class="tool tool-yellow" title="Очки"><svg><use href="#i-glasses-y"/></svg></button>
            <button class="tool" title="Слои"><svg><use href="#i-lines"/></svg></button>
            <i class="cap"></i>
        </div>
        <div class="bar bar-zoom">
            <i class="grip"></i>
            <button class="tool" title="Рамка"><svg><use href="#i-zoomwin"/></svg></button>
            <button class="tool" title="Уменьшить"><svg><use href="#i-zoomminus"/></svg></button>
            <button class="tool" title="Увеличить"><svg><use href="#i-zoomplus"/></svg></button>
            <button class="tool" title="Выбранное"><svg><use href="#i-zoomgray"/></svg></button>
            <button class="tool" title="Показать все"><svg><use href="#i-fit"/></svg></button>
            <button class="tool" title="Предыдущий"><svg><use href="#i-zoomprev"/></svg></button>
            <i class="sep"></i>
            <button class="tool" title="Рука"><svg><use href="#i-hand"/></svg></button>
            <button class="tool" title="Масштаб"><svg><use href="#i-zoomplus"/></svg></button>
            <button class="tool" title="Сдвиг"><svg><use href="#i-move"/></svg></button>
            <button class="tool" title="Вращение"><svg><use href="#i-rot"/></svg></button>
            <i class="cap"></i>
        </div>
        <div class="bar bar-show">
            <i class="grip"></i>
            <button class="tool" title="Скрыть"><svg><use href="#i-bulb"/></svg></button>
            <button class="tool" title="Показать"><svg><use href="#i-bulbg"/></svg></button>
            <button class="tool" title="Копия"><svg><use href="#i-graycopy"/></svg></button>
            <button class="tool" title="Скрыть рамкой"><svg><use href="#i-bulbsel"/></svg></button>
            <button class="tool" title="Показать рамкой"><svg><use href="#i-bulbselg"/></svg></button>
            <i class="sep"></i>
            <button class="tool" title="Обменять"><svg><use href="#i-swap"/></svg></button>
            <button class="tool" title="Назад"><svg><use href="#i-left"/></svg></button>
            <button class="tool" title="Вперед"><svg><use href="#i-right"/></svg></button>
            <i class="cap"></i>
        </div>
    </div>

    <main class="work">
        <aside class="snaps">
            <i class="dots"></i>
            <button class="snap" title="Связь"><svg><use href="#s-link"/></svg></button>
            <i class="dot"></i>
            <i class="hsep"></i>
            <button class="snap snap-on" title="Конец"><svg><use href="#s-end"/></svg></button>
            <button class="snap snap-on" title="Ближайшая"><svg><use href="#s-near"/></svg></button>
            <button class="snap snap-on" title="Середина"><svg><use href="#s-mid"/></svg></button>
            <button class="snap snap-on" title="Пересечение"><svg><use href="#s-cross"/></svg></button>
            <button class="snap" title="Центр"><svg><use href="#s-center"/></svg></button>
            <button class="snap" title="Квадрант"><svg><use href="#s-quad"/></svg></button>
            <button class="snap" title="Перпендикуляр"><svg><use href="#s-perp"/></svg></button>
            <button class="snap" title="Касательная"><svg><use href="#s-tan"/></svg></button>
            <i class="hsep"></i>
            <button class="snap snap-on" title="Сетка"><svg><use href="#s-grid"/></svg></button>
            <button class="snap snap-on" title="Плоскость"><svg><use href="#s-graph"/></svg></button>
            <i class="hsep"></i>
            <button class="snap" title="Поверхность"><svg><use href="#s-surf"/></svg></button>
            <button class="snap" title="Грань"><svg><use href="#s-surf"/></svg></button>
            <button class="snap" title="Кромка"><svg><use href="#s-surf"/></svg></button>
            <i class="hsep"></i>
            <button class="snap" title="Выбрать"><svg><use href="#s-pick"/></svg></button>
            <button class="snap" title="Снять выбор"><svg><use href="#s-unpick"/></svg></button>
            <i class="hsep"></i>
            <button class="snap" title="Проекция"><svg><use href="#s-proj"/></svg></button>
            <button class="snap" title="Цепочка"><svg><use href="#s-chain"/></svg></button>
            <button class="snap" title="Список"><svg><use href="#s-list"/></svg></button>
            <button class="snap" title="Очистить"><svg><use href="#s-clear"/></svg></button>
        </aside>

        <section class="panel navigator">
            <h2 class="panel-head">Навигатор<span class="panel-ctl"><button title="Закрепить"><svg><use href="#n-pin"/></svg></button><button title="Закрыть"><svg><use href="#n-close"/></svg></button></span></h2>
            <div class="panel-body">
                <div class="nav-tabs">
                    <button title="Рамка"><svg><use href="#n-frame"/></svg></button>
                    <button title="Эскиз"><svg><use href="#n-pen"/></svg></button>
                    <button title="Плита"><svg><use href="#n-slab"/></svg></button>
                    <button title="Траектория"><svg><use href="#n-path"/></svg></button>
                    <button class="nav-current" title="Параметры"><svg><use href="#n-win"/></svg></button>
                </div>
                <div class="nav-actions">
                    <button title="ОК"><svg><use href="#n-ok"/></svg></button>
                    <button class="act-dim" title="Применить"><svg><use href="#n-apply"/></svg></button>
                    <button title="Отмена"><svg><use href="#n-cancel"/></svg></button>
                    <button class="act-on" title="Просмотр"><svg><use href="#n-preview"/></svg></button>
                    <button class="act-drop" title="Варианты"><i class="caret"></i></button>
                    <button title="Справка"><svg><use href="#n-help"/></svg></button>
                </div>
                <form class="params">
                    <div class="param">
                        <svg class="light"><use href="#n-light"/></svg>
                        <button type="button" class="pick" disabled>Выбрать поверхность для изменени...</button>
                        <span class="side"></span>
                    </div>
                    <div class="param">
                        <svg class="light"><use href="#n-light"/></svg>
                        <button type="button" class="pick" disabled>Выберите направление[<u>D</u>]</button>
                        <button type="button" class="side side-on" title="Обратить"><svg><use href="#n-flip"/></svg></button>
                    </div>
                    <div class="param">
                        <svg class="light"><use href="#n-light"/></svg>
                        <button type="button" class="pick" disabled>Выбрать кривую для резки[<u>C</u>](1)</button>
                        <span class="side"></span>
                    </div>
                    <div class="distance">
                        <label for="distance">Расстояние</label>
                        <input type="text" id="distance" value="54.046">
                    </div>
                    <button type="button" class="reset">Сброс[<u>S</u>]</button>
                    <svg class="pointer" viewBox="0 0 38 38" aria-hidden="true"><circle cx="19" cy="19" r="19" fill="#d8d400" opacity=".75"/><path d="M19 18v14l3-3 3 6 2-1-3-6h4z" fill="#fff" stroke="#111"/></svg>
                </form>
            </div>
        </section>

        <section class="viewport">
            <svg class="scene" viewBox="230 129 847 543" preserveAspectRatio="xMidYMid meet">
                <defs>
                    <linearGradient id="glass" x1="0" y1="1" x2="1" y2="0"><stop offset="0" stop-color="#49bdb9"/><stop offset=".5" stop-color="#3f918e"/><stop offset="1" stop-color="#4d8e8c"/></linearGradient>
                    <linearGradient id="lit" x1="0" y1="1" x2="1" y2="0"><stop offset="0" stop-color="#6dfffc"/><stop offset="1" stop-color="#8dfffb"/></linearGradient>
                </defs>
                <!-- plate -->
                <path d="M316 313L621 276 893 497 590 534z" fill="#33c5c3"/>
                <path d="M316 313L590 534 574 568 301 348z" fill="#43ffff"/>
                <path d="M590 534L893 497 878 532 574 568z" fill="#155a59"/>
                <path d="M316 313L590 534 893 497" fill="none" stroke="#9c9a5c"/>
                <path d="M316 313L473 294M674 318l219 179" fill="none" stroke="#6a9a78" stroke-width=".6"/>
                <!-- transparent solid -->
                <path d="M495 244q50-7 99 8l-12 28-109 14z" fill="url(#glass)"/>
                <path d="M594 252l27 24-39 4z" fill="#72cfcd"/>
                <path d="M495 244l32 44M522 243l45 38M555 247l46 26M522 243l-18 46M525 243l-17 46M555 247l-17 42M482 275l134-13M529 268l50 14" fill="none" stroke="#6cf0ea" stroke-width=".7"/>
                <path d="M532 280l-4 7 15-2 4-6z" fill="#286866"/>
                <path d="M473 294l109-14-25 63-49-12-55 8z" fill="url(#lit)"/>
                <path d="M582 280l39-4 53 42-22 51q-17 4-45-4l-50-22z" fill="#b4ffff"/>
                <path d="M453 339l42-95q50-7 99 8l80 66-22 51" fill="none" stroke="#7ce8e5" stroke-width=".8"/>
                <!-- step -->
                <path d="M508 331C530 331 545 337 557 343 575 351 590 360 607 365Q635 373 652 369L664 378 575 382z" fill="#33c3c1"/>
                <path d="M453 339l6 8 97 77 19-42-67-51-20 6z" fill="#43ffff"/>
                <path d="M575 382l89-4-21 43-87 3z" fill="#185c59"/>
                <path d="M486 339l16-1-7 21-3 5-7 2 2 5-8-3-12-9-1-5 13-1 8-7z" fill="#0aa4ff"/>
                <path d="M456 339l6 2M464 338l8 4M474 337l4 5M455 345l8 5M470 341l3-4M461 352l8 5M476 365l8 7" stroke="#2688c8"/>
                <!-- direction arrow -->
                <path d="M480 313l43-96" stroke="#1010a8" stroke-width="3"/>
                <path d="M528 207l-10 12 9 4z" fill="#2828c8"/>
                <circle cx="480" cy="313" r="3" fill="#1010a8"/>
                <text class="dist-text" x="540" y="222">54.046</text>
                <!-- origin -->
                <path d="M645 404l51 15-50 2" fill="none" stroke="#58dcd8" stroke-width=".7"/>
                <path d="M636 427l8-20" stroke="#1414c0" stroke-width="2"/>
                <path d="M646 402l-6 7 7 3z" fill="#1818c8"/>
                <path d="M636 427l18-2m-5-2l5 2-4 3" fill="none" stroke="#901c34" stroke-width="1.5"/>
                <path d="M636 427l-7-6" stroke="#60a010"/>
                <path d="M620 424q14 18 34 8" fill="none" stroke="#288884" stroke-dasharray="1 4"/>
                <text class="axis axis-z" x="650" y="413">Z</text>
                <!-- view cube -->
                <g fill="none" stroke="#309838">
                    <path d="M252 628l12-2 13 11-7 18M252 628l-7 17 12 10M252 628l12 11 13-2M264 639l-7 16M251 644l6-1 4-4M257 643l3 3"/>
                    <path d="M265 627l5 8-9 18M262 634l4 3" stroke="#1818a8" stroke-width="2"/>
                    <path d="M257 655h12m-5-3l5 3-5 2" stroke="#e02020"/>
                    <path d="M245 645l5 1-3 3z" fill="#40c040"/>
                </g>
                <text class="axis axis-y" x="234" y="645">Y</text>
                <text class="axis axis-x" x="275" y="658">X</text>
            </svg>
            <div class="vscroll"><svg viewBox="0 0 10 10"><path d="M2 6l3-3 3 3" fill="none" stroke="#999"/></svg><svg viewBox="0 0 10 10"><path d="M2 4l3 3 3-3" fill="none" stroke="#999"/></svg></div>
            <div class="hscroll"><svg viewBox="0 0 10 10"><path d="M6 2L3 5l3 3" fill="none" stroke="#999"/></svg><svg viewBox="0 0 10 10"><path d="M4 2l3 3-3 3" fill="none" stroke="#999"/></svg></div>
        </section>

        <section class="panel layers">
            <h2 class="panel-head">Слой<span class="panel-ctl"><button title="Закрепить"><svg><use href="#n-pin"/></svg></button><button title="Закрыть"><svg><use href="#n-close"/></svg></button></span></h2>
            <div class="layer-tabs">
                <button>Свойства объекта(<u>O</u>)</button>
                <button class="layer-current">Слой</button>
            </div>
            <div class="layer-tools">
                <button title="Новый слой"><svg><use href="#l-page"/></svg></button>
                <button title="Удалить"><svg><use href="#n-cancel"/></svg></button>
                <button title="Вверх"><svg><use href="#l-up"/></svg></button>
                <button title="Вниз"><svg><use href="#l-down"/></svg></button>
                <button title="Фильтр"><svg><use href="#l-filter"/></svg></button>
                <button title="Переместить"><svg><use href="#l-into"/></svg></button>
                <button title="Копировать"><svg><use href="#l-tree"/></svg></button>
                <button title="Имя"><svg><use href="#l-font"/></svg></button>
                <button title="Порядок"><svg><use href="#l-tri"/></svg></button>
            </div>
            <div class="layer-list">
                <table>
                    <colgroup><col class="c-mark"><col class="c-name"><col class="c-flag"><col class="c-flag"><col class="c-flag"><col class="c-flag"><col></colgroup>
                    <thead>
                        <tr><th></th><th>Название</th><th>П</th><th>Б</th><th>Ц</th><th>С.</th><th>Ко...</th></tr>
                    </thead>
                    <tbody>
                        <tr class="selected"><td class="dash"></td><td>Базовый слой</td><td><svg><use href="#l-eye"/></svg></td><td><svg><use href="#l-lock"/></svg></td><td><i class="swatch orange"></i></td><td><svg><use href="#l-style"/></svg></td><td>1</td></tr>
                        <tr><td class="dash"></td><td>Слой 1</td><td><svg><use href="#l-eye"/></svg></td><td><svg><use href="#l-lock"/></svg></td><td><i class="swatch olive"></i></td><td><svg><use href="#l-style"/></svg></td><td>0</td></tr>
                        <tr><td class="dash"></td><td>Слой 2</td><td><svg><use href="#l-eye"/></svg></td><td><svg><use href="#l-lock"/></svg></td><td><i class="swatch olive"></i></td><td><svg><use href="#l-style"/></svg></td><td>0</td></tr>
                        <tr><td class="dash"></td><td>Слой 3</td><td><svg><use href="#l-eye"/></svg></td><td><svg><use href="#l-lock"/></svg></td><td><i class="swatch olive"></i></td><td><svg><use href="#l-style"/></svg></td><td>0</td></tr>
                        <tr><td><svg viewBox="0 0 16 16"><path d="M1 8l5 6 9-11" fill="none" stroke="#b02028" stroke-width="2"/></svg></td><td>Слой 4</td><td class="dash"></td><td class="dash"></td><td><i class="swatch cyan"></i></td><td><svg><use href="#l-style"/></svg></td><td>6</td></tr>
                        <tr><td class="dash"></td><td>Слой 5</td><td><svg><use href="#l-eye"/></svg></td><td><svg><use href="#l-lock"/></svg></td><td><i class="swatch magenta"></i></td><td><svg><use href="#l-style"/></svg></td><td>2</td></tr>
                    </tbody>
                </table>
            </div>
        </section>
    </main>

    <footer class="status">
        <span class="hint">Изменить заготовку: Настроить параметры.Правая кнопка(Возврат/Space) к окончанию.</span>
        <div class="status-tools">
            <button title="Обновить"><svg viewBox="0 0 12 12"><circle cx="6" cy="6" r="5" fill="#1840a0"/><path d="M1 5q3-6 9-2L7 6z" fill="#40c040"/><path d="M4 7h5" stroke="#fff"/></svg></button>
            <button title="Окно"><svg viewBox="0 0 12 12"><path d="M0 0h12v12H0z" fill="#d8dcf0"/><path d="M3 1h8v7H3zM1 9h10" fill="none" stroke="#3040a0"/><path d="M4 4h6" stroke="#3040a0"/></svg></button>
            <button title="Сетка"><svg viewBox="0 0 12 12"><path d="M0 0h12v12H0z" fill="#eee"/><path d="M6 0v12M0 6h12" stroke="#222"/></svg></button>
            <button title="Привязка"><svg viewBox="0 0 12 12"><path d="M0 0h12v12H0z" fill="#cfe4fa"/><path d="M2 2h8v8H2zM3 3l6 6M9 3L3 9" fill="none" stroke="#2858b0"/></svg></button>
            <button title="Координаты"><svg viewBox="0 0 12 12"><path d="M0 0h12v12H0z" fill="#eee"/><path d="M2 10V2h8" fill="none" stroke="#3858b0"/><path d="M1 1h3v3H1zM9 1h2v3H9zM1 9h2v2H1z" fill="#d04028"/></svg></button>
        </div>
        <output class="coords">-97.720 192.474 0.0</output>
        <div class="command">
            <button title="Выполнить"><svg viewBox="0 0 7 12"><path d="M0 0h7v12H0z" fill="#ddd"/><path d="M1 1l5 5-5 5z" fill="#000"/></svg></button>
            <button class="unit">U</button>
            <input type="text" aria-label="Команда">
        </div>
    </footer>
</body>
</html>
```
FILE: styles.css
```css
*{
    box-sizing: border-box;
}
body{
    margin: 0;
    min-height: 100vh;
    display: flex;
    flex-direction: column;
    background: #535353;
    color: #222;
    font-family: "Open Sans", "Noto Sans", sans-serif;
    font-size: 9px;
    line-height: 13px;
}
button, input{
    font: inherit;
    color: inherit;
    margin: 0;
    padding: 0;
    border: 0;
    background: none;
}
button{
    display: flex;
    align-items: center;
    justify-content: center;
    white-space: nowrap;
}
svg{
    display: block;
    flex: none;
}
.sprite{
    position: absolute;
    width: 0;
    height: 0;
}

/* title bar */
.titlebar{
    height: 20px;
    display: flex;
    align-items: center;
    background: linear-gradient(#2a2c34, #3a3b3e 30%, #474747);
    color: #e4e4e4;
}
.quick{
    width: 110px;
    height: 18px;
    display: flex;
    align-items: center;
    background: linear-gradient(#44464c, #65676b);
    border-radius: 0 0 9px 0;
}
.logo{
    width: 20px;
    height: 17px;
    margin: 0 7px 0 1px;
}
.tool{
    width: 15px;
    height: 15px;
    flex: 0 1 15px;
    min-width: 0;
}
.tool svg{
    width: 12px;
    height: 12px;
}
.quick-more, .quick-back{
    width: 12px;
    font-size: 8px;
}
.quick-back{
    color: #5058b0;
}
.menu{
    display: grid;
    grid-template-columns: 53px 52px 84px 114px 100px 113px 76px 116px 76px 83px 51px 60px;
    margin: 6px auto 0 11px;
}
.menu button{
    justify-content: flex-start;
}
.winctl{
    display: flex;
    gap: 8px;
    margin: 0 4px 4px 0;
}
.winctl svg{
    width: 10px;
    height: 10px;
}

/* ribbon tabs */
.tabrow{
    height: 17px;
    display: flex;
    align-items: center;
    background: #4b4b4b;
    color: #e4e4e4;
}
.tabs{
    display: grid;
    grid-template-columns: 54px 42px 70px 50px 70px 70px 70px 68px 59px 67px 42px 69px 62px 71px 56px;
    align-self: stretch;
    margin-right: auto;
}
.tab{
    display: block;
    text-align: center;
    overflow: hidden;
    margin: 0 2px;
    line-height: 17px;
}
.tab-file{
    margin: 0;
    background: #434ab8;
    color: #fff;
}
.tab-active{
    background: linear-gradient(#f4f6f7, #d4d9dc);
    color: #222;
    border-radius: 3px 3px 0 0;
}
.tabextra{
    display: flex;
    align-items: center;
    gap: 6px;
    margin-right: 6px;
}
.tabextra svg{
    width: 11px;
    height: 11px;
}
.chev{
    width: 4px;
    height: 4px;
    margin: 0 5px 3px 0;
    border-right: 1px solid #ccc;
    border-bottom: 1px solid #ccc;
    transform: rotate(45deg);
}
.winctl-dim{
    gap: 6px;
    margin-bottom: 0;
}

/* ribbon */
.ribbon{
    display: flex;
    justify-content: space-between;
    height: 71px;
    margin: 0 1px;
    padding: 1px;
    border: 1px solid #eef1f2;
    border-radius: 3px;
    background: linear-gradient(#d3d7db, #c3c9cf 16%, #b4bbc3 17%, #dfe5e8 80%, #e9f0f0);
}
.group{
    display: flex;
    flex-direction: column;
    border: 1px solid #a8adb0;
    border-top: 0;
}
.group-items{
    display: grid;
    grid-template-columns: 78px 82px 104px 98px 64px 54px 50px 51px 50px 54px 46px 57px 27px 36px 35px 58px 42px 50px 51px 68px;
    flex: 1;
}
.big{
    display: block;
    align-self: start;
    padding-top: 2px;
    text-align: center;
}
.big svg{
    width: 22px;
    height: 22px;
    margin: 0 auto 3px;
}
.big-on{
    color: #000;
}
.small{
    align-self: start;
    margin-top: 2px;
}
.small svg{
    width: 12px;
    height: 12px;
    margin-right: 2px;
}
.drop::after{
    content: "";
    display: inline-block;
    margin-left: 2px;
    vertical-align: 5px;
    border: 2px solid transparent;
    border-top-color: #222;
    border-bottom: 0;
}
.group-name{
    position: relative;
    height: 14px;
    line-height: 14px;
    text-align: center;
    color: #f4f4f4;
    background: linear-gradient(#9a9f9f, #b2b7b6);
}
.caret{
    flex: none;
    width: 4px;
    height: 2px;
    margin: 0 1px 0 2px;
    border: 2px solid transparent;
    border-top-color: #333;
    border-bottom: 0;
}
.group-name .caret{
    position: absolute;
    right: 4px;
    top: 6px;
}
.ribbon-caret{
    align-self: flex-end;
    margin: 0 4px 4px 0;
}

/* toolbars */
.toolbars{
    display: flex;
    height: 20px;
    padding: 2px 0 0 1px;
}
.bar{
    display: flex;
    align-items: center;
    height: 17px;
    background: linear-gradient(#cfd3d8, #a9afb8);
}
.bar-edit{ width: 173px; }
.bar-view{ width: 326px; }
.bar-zoom{ width: 168px; }
.bar-show{ width: 136px; }
.grip{
    flex: none;
    width: 2px;
    height: 12px;
    margin: 0 2px;
    background: repeating-linear-gradient(#333 0 1px, transparent 1px 3px);
}
.sep{
    flex: none;
    width: 2px;
    height: 12px;
    margin: 0 2px;
    border-left: 1px solid #888d94;
    border-right: 1px solid #e4e6ea;
}
.cap{
    flex: none;
    width: 7px;
    height: 17px;
    margin-left: auto;
    background: linear-gradient(#8b9098, #4c4f56);
    border-radius: 0 0 3px 0;
}
.tool-on{
    background: #ffe0a0;
}
.tool-yellow{
    background: #fff080;
}

/* work area */
.work{
    flex: 1;
    display: grid;
    grid-template-columns: 17px 207px minmax(0, 1fr) 184px;
    margin-bottom: 18px;
}
.snaps{
    display: flex;
    flex-direction: column;
    align-items: center;
    width: 15px;
    height: 350px;
    margin: 91px 0 0 1px;
    background: linear-gradient(90deg, #ccd1d8, #9fa6b2);
}
.snap{
    flex: 0 1 16px;
    width: 15px;
    min-height: 0;
}
.snap svg{
    width: 12px;
    height: 12px;
}
.snap-on{
    background: #ffd08c;
    border-bottom: 1px solid #d89040;
}
.dots{
    flex: none;
    width: 8px;
    height: 2px;
    margin: 2px 0 3px;
    background: repeating-linear-gradient(90deg, #222 0 2px, transparent 2px 3px);
}
.dot{
    flex: none;
    width: 2px;
    height: 2px;
    margin: 3px 0;
    background: #334;
}
.hsep{
    flex: none;
    width: 10px;
    height: 2px;
    margin: 2px 0;
    border-top: 1px solid #777d88;
    border-bottom: 1px solid #e8eaee;
}

.panel-head{
    display: flex;
    align-items: center;
    justify-content: space-between;
    height: 19px;
    margin: 0;
    padding: 0 2px 0 3px;
    background: #9b9f9f;
    color: #333;
    font-size: 9px;
    font-weight: normal;
}
.panel-ctl{
    display: flex;
    gap: 3px;
}
.panel-ctl svg{
    width: 8px;
    height: 8px;
}
.navigator{
    display: flex;
    flex-direction: column;
}
.navigator .panel-head{
    margin-right: -1px;
}
.panel-body{
    flex: 1;
    margin: 3px 1px 0 0;
    background: #f0f0f0;
}
.nav-tabs{
    display: flex;
    height: 18px;
    padding-left: 3px;
    background: #fafafa;
}
.nav-tabs button{
    width: 21px;
    border-right: 1px solid #555;
}
.nav-tabs svg{
    width: 14px;
    height: 14px;
}
.nav-current{
    background: #fff;
}
.nav-actions{
    display: flex;
    gap: 3px;
    height: 23px;
    margin: 2px 5px 0 4px;
    padding: 2px;
    border: 1px solid #fff;
    border-right-color: #ccc;
    border-bottom-color: #ccc;
}
.nav-actions button{
    width: 18px;
    height: 18px;
    border: 1px solid #ccc;
    background: #e4e4e4;
}
.nav-actions svg{
    width: 12px;
    height: 12px;
}
.nav-actions .act-dim{
    background: #ccc;
}
.nav-actions .act-on{
    border-color: #2878c8;
    background: #cce4f8;
}
.nav-actions .act-drop{
    width: 8px;
}
.act-drop .caret{
    margin: 0;
    width: 6px;
    height: 3px;
    border-width: 3px;
    border-bottom: 0;
    border-top-color: #000;
}
.params{
    position: relative;
    margin: 11px 3px 0 4px;
    border: 1px solid #c4c4c4;
    padding: 1px;
    font-family: "Liberation Sans", Arial, sans-serif;
    font-size: 9px;
}
.param{
    display: flex;
    align-items: center;
    gap: 3px;
    height: 19px;
    border-bottom: 1px solid #fff;
}
.light{
    width: 6px;
    height: 11px;
    margin-left: 1px;
}
.pick{
    flex: 1;
    height: 15px;
    justify-content: flex-start;
    padding-left: 3px;
    background: #c2c2c2;
    color: #808080;
    text-shadow: 1px 1px 0 #e4e4e4;
}
.side{
    width: 11px;
    height: 16px;
    background: #f4f4f4;
}
.side-on{
    background: #ccc;
}
.side svg{
    width: 9px;
    height: 11px;
}
.distance{
    display: grid;
    grid-template-columns: 95px 1fr;
    height: 18px;
}
.distance label, .reset{
    border: 1px solid #b4b4b4;
    background: #e2e2e2;
    text-align: center;
    font-size: 10px;
}
.distance label{
    line-height: 15px;
    margin-bottom: 1px;
}
.distance input{
    min-width: 0;
    padding: 2px 0 0 4px;
    background: #fff;
}
.reset{
    width: 100%;
    height: 17px;
    margin: 2px 0;
}
/* mouse pointer with highlight */
.pointer{
    position: absolute;
    left: 92px;
    top: -5px;
    width: 38px;
    height: 38px;
}

/* 3D view */
.viewport{
    display: grid;
    grid-template-columns: minmax(0, 1fr) 16px;
    grid-template-rows: minmax(0, 1fr) 15px;
    margin: 0 3px 0 5px;
    border-left: 1px solid #777;
    background: #000;
}
.scene{
    width: 100%;
    height: 100%;
    background: #000;
}
.dist-text{
    font: bold 11px "Liberation Sans", Arial, sans-serif;
    fill: #f01818;
}
.axis{
    font: 10px "Liberation Sans", Arial, sans-serif;
}
.axis-x{ fill: #e02020; }
.axis-y{ fill: #30b038; }
.axis-z{ fill: #1818c8; }
.vscroll, .hscroll{
    display: flex;
    justify-content: space-between;
    background: #f0f0f0;
}
.vscroll{
    flex-direction: column;
    align-items: center;
    padding: 3px 0;
}
.hscroll{
    grid-column: 1 / 3;
    align-items: center;
    padding: 0 17px 0 2px;
}
.vscroll svg, .hscroll svg{
    width: 10px;
    height: 10px;
}

/* layers */
.layers{
    display: flex;
    flex-direction: column;
    margin-right: 1px;
}
.layer-tabs{
    display: flex;
    align-items: center;
    gap: 9px;
    height: 21px;
    padding-left: 5px;
    background: #f0f0f0;
}
.layer-current{
    padding: 0 2px;
    height: 17px;
    border: 1px solid #b8cccc;
    background: #dfe9ea;
}
.layer-tools{
    display: flex;
    align-self: flex-start;
    height: 16px;
    padding-left: 6px;
    background: #f4f4f4;
}
.layer-tools button{
    width: 15px;
    border-right: 1px solid #888;
}
.layer-tools svg{
    width: 9px;
    height: 9px;
}
.layer-list{
    flex: 1;
    margin-top: 2px;
    padding-right: 2px;
    border: 1px solid #aaa;
    background: #fff;
}
.layer-list table{
    width: 100%;
    height: 82px;
    table-layout: fixed;
    border-collapse: collapse;
    font-family: "Liberation Sans", Arial, sans-serif;
    font-size: 10px;
    line-height: 11px;
}
.c-mark{ width: 13px; }
.c-name{ width: 91px; }
.c-flag{ width: 12px; }
.layer-list th, .layer-list td{
    padding: 0 0 0 2px;
    text-align: left;
    font-weight: normal;
    white-space: nowrap;
}
.layer-list th{
    height: 13px;
    border-right: 1px solid #888;
    border-bottom: 1px solid #ccc;
    background: #f6f6f6;
}
.layer-list td:nth-child(n+3):nth-child(-n+6){
    padding: 0 1px;
    background: #fff;
}
.layer-list td:nth-child(2), .layer-list th:nth-child(2){
    padding-left: 3px;
}
.layer-list th:nth-child(n+3):nth-child(-n+6){
    padding-left: 1px;
}
.layer-list td svg{
    width: 9px;
    height: 9px;
}
.layer-list td:last-child{
    padding-left: 4px;
}
.selected td{
    background: #0a78d4;
    color: #fff;
}
.layer-list .selected td:first-child{
    background: #fff;
}
.dash::before{
    content: "";
    display: block;
    width: 9px;
    border-top: 1px dotted #aaa;
}
.swatch{
    display: block;
    width: 9px;
    height: 9px;
}
.orange{ background: #ff8000; }
.olive{ background: #808000; }
.cyan{ background: #30ffff; }
.magenta{ background: #ff00ff; }

/* status bar */
.status{
    display: flex;
    align-items: center;
    height: 15px;
    padding-left: 4px;
    border-top: 1px solid #777;
    background: linear-gradient(#3c4048, #25272c);
    color: #f0f0f0;
    font-family: "Liberation Sans", Arial, sans-serif;
    font-size: 10px;
}
.status-tools{
    display: flex;
    gap: 4px;
    margin-left: auto;
}
.status-tools svg{
    width: 12px;
    height: 12px;
}
.coords{
    width: 128px;
    padding-left: 4px;
    font-size: 9px;
}
.command{
    display: flex;
    gap: 4px;
}
.command svg{
    width: 7px;
    height: 12px;
}
.unit{
    width: 12px;
    height: 12px;
    background: #ddd;
    color: #222;
}
.command input{
    width: 121px;
    height: 13px;
    border: 1px solid #eee;
    background: #c0c0c0;
}
```
